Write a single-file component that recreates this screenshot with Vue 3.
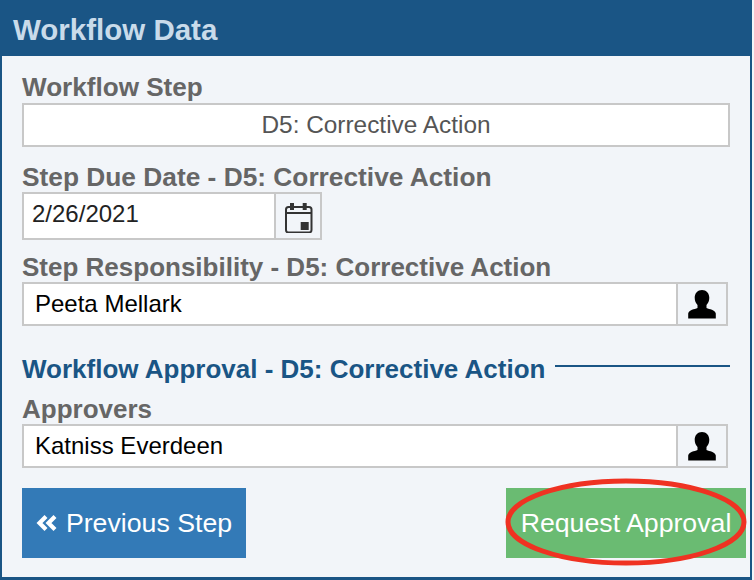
<template>
  <div class="page">
    <section class="panel">
      <header class="head">Workflow Data</header>
      <div class="body">
        <label class="lbl l1">Workflow Step</label>
        <div class="static">D5: Corrective Action</div>

        <label class="lbl l2">Step Due Date - D5: Corrective Action</label>
        <div class="group date">
          <div class="val">2/26/2021</div>
          <div class="addon">
            <svg width="30" height="34" viewBox="0 0 30 34" fill="none">
              <rect x="3" y="8" width="25.500" height="25.500" rx="2.500" stroke="#333" stroke-width="2"/>
              <path d="M3 14H28.500" stroke="#333" stroke-width="2"/>
              <rect x="7" y="4" width="4" height="7" fill="#333"/>
              <rect x="19.700" y="4" width="4" height="7" fill="#333"/>
              <rect x="17.700" y="23" width="8" height="8" fill="#333"/>
            </svg>
          </div>
        </div>

        <label class="lbl l3">Step Responsibility - D5: Corrective Action</label>
        <div class="group person">
          <div class="val">Peeta Mellark</div>
          <div class="addon">
            <svg width="30" height="32" viewBox="0 0 30 32">
              <path d="M15 2c4.300 0 7.300 3.200 7.300 7.800 0 3-1.200 5.700-2.800 7.200v3c3 1.300 8.500 1.800 9.300 5.500v5H1.200v-5c.8-3.700 6.300-4.200 9.300-5.500v-3c-1.600-1.500-2.800-4.200-2.800-7.200C7.700 5.200 10.700 2 15 2z" fill="#000"/>
            </svg>
          </div>
        </div>

        <div class="divider">
          <span>Workflow Approval - D5: Corrective Action</span>
          <i></i>
        </div>

        <label class="lbl l4">Approvers</label>
        <div class="group person">
          <div class="val">Katniss Everdeen</div>
          <div class="addon">
            <svg width="30" height="32" viewBox="0 0 30 32">
              <path d="M15 2c4.300 0 7.300 3.200 7.300 7.800 0 3-1.200 5.700-2.800 7.200v3c3 1.300 8.500 1.800 9.300 5.500v5H1.200v-5c.8-3.700 6.300-4.200 9.300-5.500v-3c-1.600-1.500-2.800-4.200-2.800-7.200C7.700 5.200 10.700 2 15 2z" fill="#000"/>
            </svg>
          </div>
        </div>

        <div class="actions">
          <button class="btn prev">
            <svg width="21" height="16" viewBox="0 0 21 16" fill="none">
              <path d="M10 1.500L3.500 8l6.500 6.500M19 1.500L12.500 8l6.500 6.500" stroke="#fff" stroke-width="4.200"/>
            </svg>
            Previous Step
          </button>
          <button class="btn next">
            Request Approval
            <svg class="oval" width="250" height="90" viewBox="0 0 250 90" fill="none">
              <ellipse cx="125" cy="45" rx="118" ry="41" stroke="#ef3222" stroke-width="5"/>
            </svg>
          </button>
        </div>
      </div>
    </section>
  </div>
</template>

<script setup>
</script>

<style>
html, body { margin: 0; background: #f2f5f9; }
</style>

<style scoped>
.page {
  width: 754px;
  height: 580px;
  overflow: hidden;
  font-family: "Liberation Sans", Arial, sans-serif;
}
.panel {
  width: 752px;
  height: 580px;
  box-sizing: border-box;
  border: solid #1a5585;
  border-width: 0 2px 3px 2px;
  background: #f2f5f9;
}
.head {
  height: 56px;
  margin: 0 -2px;
  box-sizing: border-box;
  background: #1a5585;
  color: #c9dbea;
  font-size: 29.500px;
  font-weight: 700;
  line-height: 60px;
  padding-left: 13px;
}
.body {
  padding: 0 20px;
}
.lbl {
  display: block;
  color: #666;
  font-size: 26px;
  font-weight: 700;
  line-height: 30px;
}
.l1 { margin-top: 16px; font-size: 26.100px; }
.l2 { margin-top: 15px; font-size: 26.300px; }
.l3 { margin-top: 12px; }
.l4 { margin-top: 10px; }
.static {
  height: 44px;
  box-sizing: border-box;
  border: 2px solid #c8c8c8;
  background: #fff;
  color: #555;
  font-size: 24.400px;
  line-height: 40px;
  text-align: center;
  margin-top: 1px;
  width: 708px;
}
.group {
  display: flex;
  box-sizing: border-box;
  border: 2px solid #c8c8c8;
}
.val {
  flex: 1;
  background: #fff;
  color: #222;
  font-size: 24px;
  border-right: 2px solid #c8c8c8;
}
.addon {
  display: flex;
  align-items: center;
  justify-content: center;
  background: #f2f5f9;
}
.date {
  width: 300px;
  height: 48px;
}
.date .val { line-height: 39px; padding-left: 8px; }
.date .addon { width: 44px; }
.person {
  width: 706px;
  height: 44px;
}
.person .val { line-height: 40px; padding-left: 11px; color: #000; }
.person .addon { width: 48px; }
.divider {
  display: flex;
  align-items: center;
  gap: 10px;
  margin-top: 28px;
  width: 708px;
  color: #1a5585;
  font-size: 26px;
  font-weight: 700;
  line-height: 30px;
}
.divider span { white-space: nowrap; }
.divider i {
  flex: 1;
  height: 2px;
  margin-top: -6px;
  background: #1a5585;
}
.actions {
  display: flex;
  justify-content: space-between;
  margin-top: 20px;
  width: 724px;
}
.btn {
  position: relative;
  height: 70px;
  border: 0;
  padding: 0;
  color: #fff;
  font-family: inherit;
  font-size: 26.700px;
  display: flex;
  align-items: center;
  justify-content: center;
  gap: 9px;
}
.prev { width: 224px; background: #337ab7; }
.next { width: 240px; background: #6abb72; }
.oval {
  position: absolute;
  left: -5.500px;
  top: -11px;
}
</style>
